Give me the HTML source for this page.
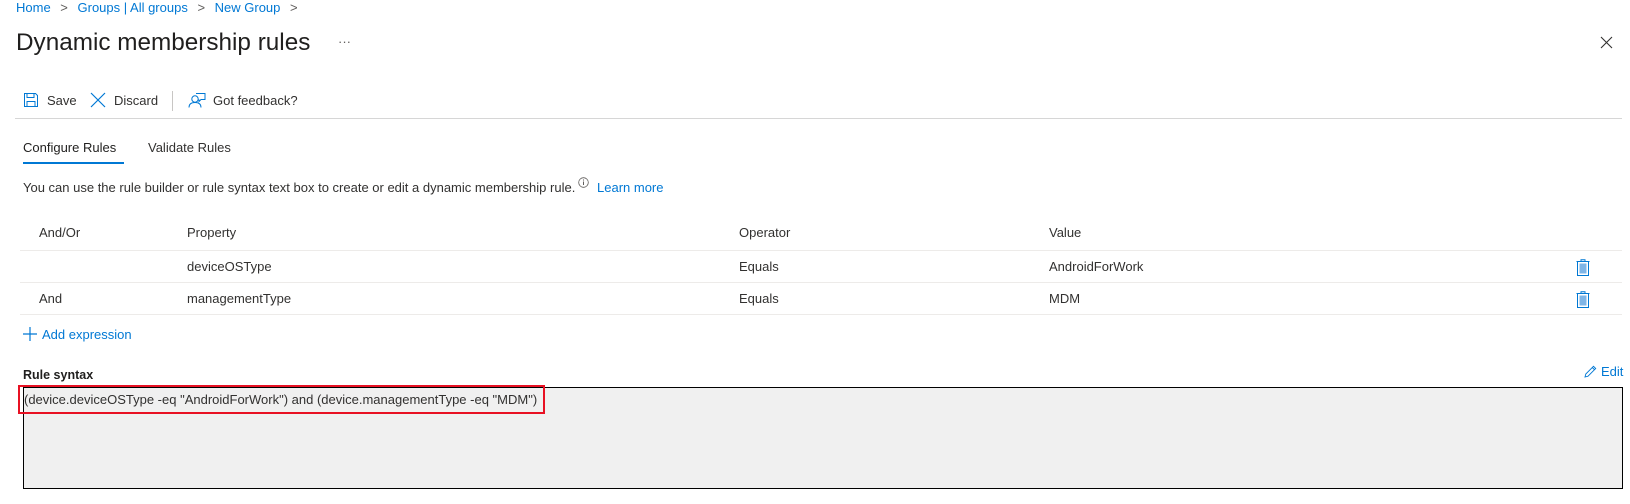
<!DOCTYPE html>
<html><head><meta charset="utf-8"><style>
*{margin:0;padding:0;box-sizing:border-box}
body{width:1630px;height:504px;background:#fff;font-family:"Liberation Sans","DejaVu Sans",sans-serif;font-size:13px;color:#323130;position:relative;overflow:hidden}
.a{position:absolute;white-space:nowrap}
.blue{color:#0078d4}
.hl{position:absolute;height:1px;background:#edebe9}
</style></head><body>
<div class="a blue" style="left:16px;top:0px;font-size:13px;line-height:16px">Home <span style="color:#605e5c;margin:0 6px">&gt;</span> Groups | All groups <span style="color:#605e5c;margin:0 6px">&gt;</span> New Group <span style="color:#605e5c;margin:0 6px">&gt;</span></div>
<div class="a" style="left:16px;top:29px;font-size:24.3px;line-height:28px;color:#201f1e">Dynamic membership rules</div>
<div class="a" style="left:338px;top:34px;font-size:13px;color:#605e5c">···</div>
<svg class="a" style="left:1600px;top:36px" width="13" height="13" viewBox="0 0 13 13"><path d="M1 1L12 12M12 1L1 12" stroke="#323130" stroke-width="1.1"/></svg>

<svg class="a" style="left:23px;top:92px" width="16" height="16" viewBox="0 0 16 16"><path d="M1.5 1.5h11l2 2v11h-13z" fill="none" stroke="#0078d4"/><path d="M4 1.5v4h7v-4M4 14.5v-5h8v5" fill="none" stroke="#0078d4"/></svg>
<div class="a" style="left:47px;top:93px;line-height:16px">Save</div>
<svg class="a" style="left:90px;top:92px" width="16" height="16" viewBox="0 0 16 16"><path d="M1 1L15 15M15 1L1 15" stroke="#0078d4" stroke-width="1.2"/></svg>
<div class="a" style="left:114px;top:93px;line-height:16px">Discard</div>
<div class="a" style="left:172px;top:91px;width:1px;height:20px;background:#c8c6c4"></div>
<svg class="a" style="left:188px;top:92px" width="18" height="16" viewBox="0 0 18 16"><circle cx="7" cy="7" r="3.2" fill="none" stroke="#0078d4"/><path d="M1 15.5c0-3.5 2.5-5 6-5s6 1.5 6 5" fill="none" stroke="#0078d4"/><path d="M8 1.5h9v6h-4l-2 2v-2" fill="none" stroke="#0078d4"/></svg>
<div class="a" style="left:213px;top:93px;line-height:16px">Got feedback?</div>
<div class="hl" style="left:15px;top:118px;width:1607px;background:#d6d6d6"></div>

<div class="a" style="left:23px;top:140px;line-height:16px;color:#201f1e">Configure Rules</div>
<div class="a" style="left:23px;top:162px;width:101px;height:2px;background:#0078d4"></div>
<div class="a" style="left:148px;top:140px;line-height:16px">Validate Rules</div>
<div class="a" style="left:23px;top:180px;line-height:16px">You can use the rule builder or rule syntax text box to create or edit a dynamic membership rule.</div>
<svg class="a" style="left:578px;top:177px" width="11" height="11" viewBox="0 0 11 11"><circle cx="5.5" cy="5.5" r="4.8" fill="none" stroke="#605e5c" stroke-width=".8"/><path d="M5.5 4.5v3.5" stroke="#605e5c"/><circle cx="5.5" cy="3" r=".6" fill="#605e5c"/></svg>
<div class="a blue" style="left:597px;top:180px;line-height:16px">Learn more</div>

<div class="a" style="left:39px;top:225px;line-height:16px">And/Or</div>
<div class="a" style="left:187px;top:225px;line-height:16px">Property</div>
<div class="a" style="left:739px;top:225px;line-height:16px">Operator</div>
<div class="a" style="left:1049px;top:225px;line-height:16px">Value</div>
<div class="hl" style="left:20px;top:250px;width:1602px"></div>
<div class="a" style="left:187px;top:259px;line-height:16px">deviceOSType</div>
<div class="a" style="left:739px;top:259px;line-height:16px">Equals</div>
<div class="a" style="left:1049px;top:259px;line-height:16px">AndroidForWork</div>
<div class="hl" style="left:20px;top:282px;width:1602px"></div>
<div class="a" style="left:39px;top:291px;line-height:16px">And</div>
<div class="a" style="left:187px;top:291px;line-height:16px">managementType</div>
<div class="a" style="left:739px;top:291px;line-height:16px">Equals</div>
<div class="a" style="left:1049px;top:291px;line-height:16px">MDM</div>
<div class="hl" style="left:20px;top:314px;width:1602px"></div>
<svg class="a" style="left:1576px;top:259px" width="14" height="17" viewBox="0 0 14 17"><path d="M5 2V.8h4V2M.5 2.5h13" stroke="#0078d4" fill="none"/><rect x="1.5" y="2.5" width="11" height="14" fill="none" stroke="#0078d4"/><rect x="3.5" y="4.5" width="7" height="10" fill="#7fb5e6"/></svg>
<svg class="a" style="left:1576px;top:291px" width="14" height="17" viewBox="0 0 14 17"><path d="M5 2V.8h4V2M.5 2.5h13" stroke="#0078d4" fill="none"/><rect x="1.5" y="2.5" width="11" height="14" fill="none" stroke="#0078d4"/><rect x="3.5" y="4.5" width="7" height="10" fill="#7fb5e6"/></svg>

<svg class="a" style="left:23px;top:327px" width="14" height="14" viewBox="0 0 14 14"><path d="M7 0v14M0 7h14" stroke="#0078d4" stroke-width="1.2"/></svg>
<div class="a blue" style="left:42px;top:327px;line-height:16px">Add expression</div>

<div class="a" style="left:23px;top:367px;line-height:16px;font-weight:bold;color:#201f1e;font-size:12.5px">Rule syntax</div>
<svg class="a" style="left:1584px;top:365px" width="13" height="13" viewBox="0 0 13 13"><path d="M1 12l.8-3L9.5 1.3l2.2 2.2L4 11.2z M8.3 2.5l2.2 2.2" fill="none" stroke="#0078d4" stroke-width=".9"/></svg>
<div class="a blue" style="left:1601px;top:364px;line-height:16px">Edit</div>

<div class="a" style="left:23px;top:387px;width:1600px;height:102px;background:#f0f0f0;border:1px solid #000"></div>
<div class="a" style="left:18px;top:385px;width:527px;height:29px;border:2px solid #e81123"></div>
<div class="a" style="left:24px;top:392px;line-height:16px;color:#323130">(device.deviceOSType -eq "AndroidForWork") and (device.managementType -eq "MDM")</div>
</body></html>
